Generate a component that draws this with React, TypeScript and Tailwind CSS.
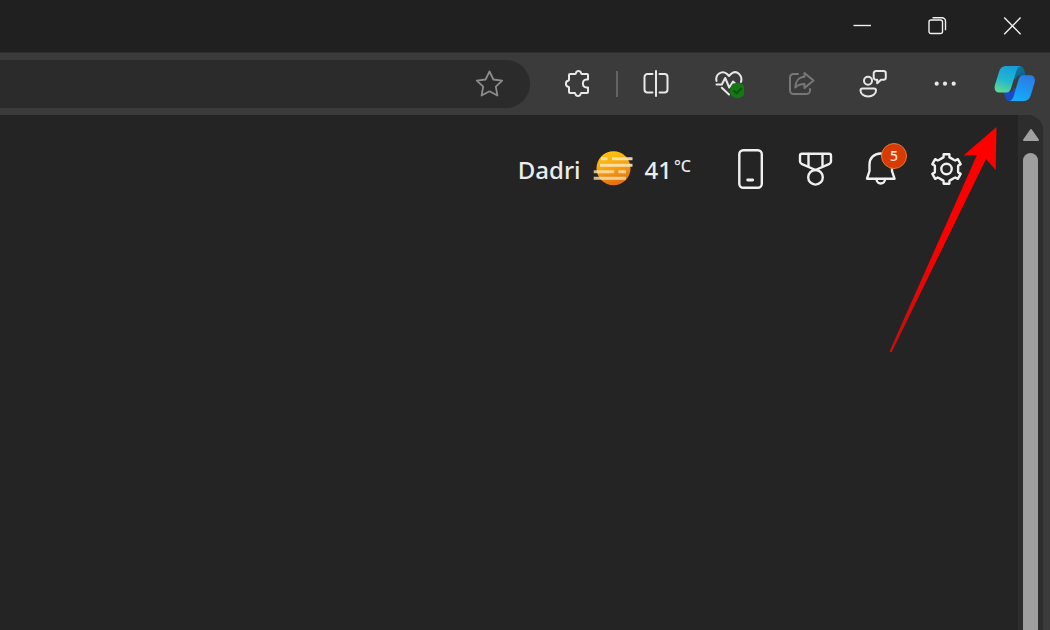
import type { ReactNode } from "react";

function TitleButton({ label, children }: { label: string; children: ReactNode }) {
  return (
    <button
      type="button"
      aria-label={label}
      className="flex h-full w-[75px] items-center justify-center text-[#f0f0f0] hover:bg-white/10"
    >
      <svg viewBox="0 0 19 18" className="h-[18px] w-[19px]" fill="none" stroke="currentColor" strokeWidth="1.4">
        {children}
      </svg>
    </button>
  );
}

function ToolbarButton({
  label,
  disabled,
  children,
}: {
  label: string;
  disabled?: boolean;
  children: ReactNode;
}) {
  return (
    <button
      type="button"
      aria-label={label}
      disabled={disabled}
      className="flex h-full w-[72px] shrink-0 items-center justify-center text-[#e8e8e8] disabled:text-[#777777]"
    >
      <svg
        viewBox="0 0 32 32"
        className="size-8"
        fill="none"
        stroke="currentColor"
        strokeWidth="2"
        strokeLinecap="round"
        strokeLinejoin="round"
      >
        {children}
      </svg>
    </button>
  );
}

function PageButton({ label, badge, children }: { label: string; badge?: number; children: ReactNode }) {
  return (
    <button
      type="button"
      aria-label={label}
      className="flex w-[65px] shrink-0 items-center justify-center text-[#f0f0f0]"
    >
      <span className="relative">
        <svg
          viewBox="0 0 45 45"
          className="size-[45px]"
          fill="none"
          stroke="currentColor"
          strokeWidth="2.4"
          strokeLinecap="round"
          strokeLinejoin="round"
        >
          {children}
        </svg>
        {badge !== undefined && (
          <span className="absolute -top-1 -right-[3px] flex size-[26px] items-center justify-center rounded-full border border-[#e5763f] bg-[#d83b01] text-sm font-medium text-[#ffe9dd]">
            {badge}
          </span>
        )}
      </span>
    </button>
  );
}

function TitleBar() {
  return (
    <header className="flex h-[52px] shrink-0 justify-end bg-[#202020]">
      <TitleButton label="Minimize">
        <path d="M0.5 8.5h17.5" />
      </TitleButton>
      <TitleButton label="Restore">
        <rect x="1" y="3" width="13.5" height="13.5" rx="2" />
        <path d="M4.5 0.7h9.5a3.5 3.5 0 0 1 3.5 3.5v9" />
      </TitleButton>
      <TitleButton label="Close">
        <path d="M1.2 0.6l16.4 16.6M17.6 0.6L1.2 17.2" />
      </TitleButton>
    </header>
  );
}

function CopilotLogo() {
  return (
    <svg viewBox="0 0 44 44" className="size-11">
      <defs>
        <linearGradient id="cp-left" x1="0.65" y1="0" x2="0.3" y2="1">
          <stop offset="0" stopColor="#189cdc" />
          <stop offset="0.55" stopColor="#20b8d0" />
          <stop offset="1" stopColor="#5fd992" />
        </linearGradient>
        <linearGradient id="cp-right" x1="0.7" y1="0" x2="0.35" y2="1">
          <stop offset="0" stopColor="#2b7ae4" />
          <stop offset="1" stopColor="#14adfb" />
        </linearGradient>
        <linearGradient id="cp-top" x1="0" y1="0" x2="1" y2="1">
          <stop offset="0" stopColor="#0b86a8" />
          <stop offset="1" stopColor="#0f5480" />
        </linearGradient>
        <linearGradient id="cp-bottom" x1="0" y1="0" x2="1" y2="1">
          <stop offset="0" stopColor="#1f4fae" />
          <stop offset="1" stopColor="#1746e0" />
        </linearGradient>
      </defs>
      <path d="M20 4h6c3 0 4.400 1.600 5.200 4l1.600 5.500h-5.600c-2.600 0-3.900 1.600-4.800 4.200L18 14z" fill="url(#cp-top)" />
      <path d="M10.500 30h6.300c2.400 0 3.200-1.500 4-4l4.600 1-4.400 12h-4.200c-2.400 0-3.700-1.400-4.400-3.600z" fill="url(#cp-bottom)" />
      <path
        d="M13.400 4h14.600c-2.700.6-3.900 2.600-4.800 5.400l-5 16.400c-.9 2.800-2 4.800-5 4.800H6.800c-4.300 0-5.900-3.400-4.900-7.400L6 10c1.100-3.800 3.300-6 7.400-6z"
        fill="url(#cp-left)"
      />
      <path
        d="M30.400 39H16c2.800-.5 4-2.500 4.900-5.300l4.500-15.800c.9-2.800 2-4.700 5-4.700h6.500c4.300 0 5.700 3.500 4.700 7.500L37.800 33c-1.100 3.800-3.300 6-7.400 6z"
        fill="url(#cp-right)"
      />
    </svg>
  );
}

function Toolbar() {
  return (
    <div className="flex h-[63px] shrink-0 items-center border-t border-[#303030] bg-[#3b3b3b]">
      <div className="mr-[11px] flex h-12 min-w-0 flex-1 items-center rounded-r-full bg-[#2b2b2b] pr-6">
        <input
          type="text"
          aria-label="Address and search bar"
          className="h-full min-w-0 flex-1 bg-transparent px-4 text-xl text-[#e8e8e8] outline-none"
        />
        <button type="button" aria-label="Add to favorites" className="text-[#8c8c8c]">
          <svg
            viewBox="0 0 32 32"
            className="size-8"
            fill="none"
            stroke="currentColor"
            strokeWidth="1.8"
            strokeLinejoin="round"
          >
            <path d="M15.500 3.500l3.900 8 8.800 1.200-6.400 6 1.600 8.800-7.900-4.200-7.900 4.200 1.600-8.800-6.400-6 8.800-1.200z" />
          </svg>
        </button>
      </div>

      <ToolbarButton label="Extensions">
        <path d="M9 6h5.300c.6 0 .6-.5.700-1 .6-2.600 4.400-2.600 5 0 .1.500.1 1 .7 1H26c.6 0 1 .4 1 1v4.500h-1.500c-4.800.3-4.800 7.700 0 8H27V24c0 .6-.4 1-1 1h-5.800c-.6 0-.6.5-.7 1-.6 2.600-4.400 2.600-5 0-.1-.5-.1-1-.7-1H9c-.6 0-1-.4-1-1v-4.500c0-.6-.5-.6-1-.7-2.800-.7-2.800-5.300 0-6 .5-.1 1-.1 1-.7V7c0-.6.400-1 1-1z" />
      </ToolbarButton>
      <div className="flex w-[7px] justify-center">
        <div className="h-[26px] w-0.5 bg-[#636363]" />
      </div>
      <ToolbarButton label="Split screen">
        <path d="M16 3v25" />
        <path d="M12.500 6H7.500A3 3 0 0 0 4.500 9v12.500a3 3 0 0 0 3 3h5M19.500 6h5a3 3 0 0 1 3 3v12.500a3 3 0 0 1-3 3h-5" />
      </ToolbarButton>
      <ToolbarButton label="Browser essentials">
        <path d="M4.500 13C3 7 9.500 1.500 14.800 5.800L17 8l2.200-2.200C24.500 1.500 31 7 29 14" />
        <path d="M4.500 16.500h5.300l3.400-6.500 4 9.500 3.800-6 2.500 2.500" />
        <path d="M9.800 19.800L17 26.500" />
        <circle cx="25.500" cy="22.500" r="7.700" fill="#137a13" stroke="none" />
        <path d="M22 22.800l2.500 2.500 4.700-4.800" stroke="#0d550d" />
      </ToolbarButton>
      <ToolbarButton label="Share" disabled>
        <path d="M14 6H9.500A3.500 3.500 0 0 0 6 9.500v13A3.500 3.500 0 0 0 9.500 26h13a3.500 3.500 0 0 0 3.500-3.500V21" />
        <path d="M20.500 5l9 7.500-9 7.500v-4c-4.300 0-7 1-9.200 3.500C11.500 13 15 9 20.500 8.800z" />
      </ToolbarButton>
      <ToolbarButton label="Feedback">
        <circle cx="12" cy="12.700" r="4" />
        <path d="M6.500 20.500h11.500a2 2 0 0 1 2 2c0 3.500-3.500 6-7.800 6s-7.700-2.500-7.700-6a2 2 0 0 1 2-2z" />
        <path d="M20 3h7.500a2.300 2.300 0 0 1 2.300 2.300v4.200a2.300 2.300 0 0 1-2.300 2.300H25l-3.800 3.500v-3.500H20a2.300 2.300 0 0 1-2.300-2.300V5.300A2.300 2.300 0 0 1 20 3z" />
      </ToolbarButton>
      <ToolbarButton label="Settings and more">
        <g fill="currentColor" stroke="none">
          <circle cx="8.700" cy="15.700" r="2.100" />
          <circle cx="17" cy="15.700" r="2.100" />
          <circle cx="25.700" cy="15.700" r="2.100" />
        </g>
      </ToolbarButton>
      <button type="button" aria-label="Copilot" className="flex h-full w-[70px] shrink-0 items-center justify-center">
        <CopilotLogo />
      </button>
    </div>
  );
}

function WeatherIcon() {
  return (
    <svg viewBox="0 0 40 40" className="size-10" aria-hidden="true">
      <defs>
        <linearGradient id="sun" x1="0.3" y1="0" x2="0.6" y2="1">
          <stop offset="0" stopColor="#fcc70e" />
          <stop offset="0.5" stopColor="#f7a012" />
          <stop offset="1" stopColor="#e56a10" />
        </linearGradient>
      </defs>
      <circle cx="20.500" cy="18.300" r="17" fill="url(#sun)" />
      <g stroke="#fbe3b0" strokeWidth="3" strokeOpacity="0.92">
        <path d="M8 8.700h6.500M19 8.700h20.500M7 15.300h32.500" />
        <path d="M0.700 21.700h20.500M25.300 21.700H33M0.700 28.300H33" strokeOpacity="0.8" />
      </g>
    </svg>
  );
}

// Outline of the six-toothed gear, centred on 22.5, 22
const gearPoints = [0, 60, 120, 180, 240, 300]
  .flatMap((tooth) =>
    [
      [-20, 11.8],
      [-14, 12.2],
      [-11, 15],
      [11, 15],
      [14, 12.2],
      [20, 11.8],
    ].map(([offset, radius]) => {
      const angle = ((tooth + offset - 90) * Math.PI) / 180;
      return `${(22.5 + radius * Math.cos(angle)).toFixed(2)},${(22 + radius * Math.sin(angle)).toFixed(2)}`;
    }),
  )
  .join(" ");

function PageHeader() {
  return (
    <div className="flex items-center justify-end pt-8 pr-[39px]">
      <a href="#weather" className="mr-7 flex items-center text-2xl font-medium text-[#ececec]">
        <span>Dadri</span>
        <span className="mr-3 ml-3">
          <WeatherIcon />
        </span>
        <span className="flex items-start">
          41
          <span className="ml-0.5 text-base">°C</span>
        </span>
      </a>
      <PageButton label="Mobile">
        <rect x="10.300" y="3.300" width="22.500" height="37.500" rx="4" />
        <path d="M18.700 33h5" strokeWidth="2.800" />
      </PageButton>
      <PageButton label="Rewards">
        <path d="M8 6.700h27a2 2 0 0 1 2 2v5.500a3 3 0 0 1-1.500 2.600L21.500 23 7.500 16.800A3 3 0 0 1 6 14.200V8.700a2 2 0 0 1 2-2z" />
        <path d="M14.500 7v12M28.500 7v12" />
        <circle cx="21.500" cy="30.300" r="7.300" />
      </PageButton>
      <PageButton label="Notifications" badge={5}>
        <path d="M21.500 6.500c-6.500 0-11 4.800-11 11v6.500L8 31.700h27.500L33 24v-6.500c0-6.200-5-11-11.500-11z" />
        <path d="M17.500 32c0 6 8.500 6 8.500 0" />
      </PageButton>
      <PageButton label="Page settings">
        <polygon points={gearPoints} />
        <circle cx="22.500" cy="22" r="5.200" />
      </PageButton>
    </div>
  );
}

function ScrollBar() {
  return (
    <div className="flex w-[25px] shrink-0 flex-col items-center bg-[#2d2d2d] pt-[13px]">
      <button type="button" aria-label="Scroll up" className="mb-[11px]">
        <svg viewBox="0 0 18 14" className="h-3.5 w-[18px]">
          <path
            d="M9 2L16 12H2z"
            fill="#a0a0a0"
            stroke="#a0a0a0"
            strokeWidth="2"
            strokeLinejoin="round"
          />
        </svg>
      </button>
      <div className="w-[15px] flex-1 rounded-t-full bg-[#9f9f9f]" />
    </div>
  );
}

export default function App() {
  return (
    <div className="relative flex h-screen flex-col overflow-hidden bg-[#3b3b3b] font-['Noto_Sans','Open_Sans',sans-serif]">
      <TitleBar />
      <Toolbar />
      <div className="flex min-h-0 flex-1 pr-[7px]">
        <div className="flex min-w-0 flex-1 overflow-hidden rounded-tr-2xl bg-[#242424]">
          <main className="min-w-0 flex-1">
            <PageHeader />
          </main>
          <ScrollBar />
        </div>
      </div>

      {/* Callout arrow pointing at the Copilot button */}
      <svg
        viewBox="0 0 110 228"
        className="pointer-events-none absolute top-[126px] right-[52px] h-[228px] w-[110px]"
        aria-hidden="true"
      >
        <defs>
          <linearGradient id="callout" x1="0" y1="1" x2="0" y2="0">
            <stop offset="0" stopColor="#c01010" />
            <stop offset="0.5" stopColor="#ff0000" />
          </linearGradient>
        </defs>
        <path d="M108.500 1L75.500 29.500 89 29 1.500 225.500 3.500 226.500 98 33 107.700 44z" fill="url(#callout)" />
      </svg>
    </div>
  );
}
